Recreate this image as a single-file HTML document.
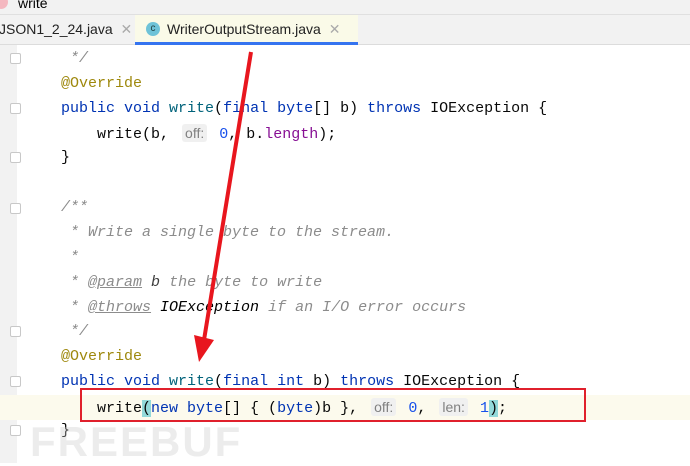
<!DOCTYPE html>
<html><head><style>
body{margin:0;width:690px;height:463px;overflow:hidden;background:#fff;position:relative;font-family:"Liberation Mono",monospace;}
.t{position:absolute;left:0;top:0;width:690px;height:14px;background:#f2f2f2;border-bottom:1px solid #e0e0e0}
.tabs{position:absolute;left:0;top:15px;width:690px;height:29px;background:#f2f2f2;border-bottom:1px solid #dcdcdc;font-family:"Liberation Sans",sans-serif;font-size:14px;color:#222}
.gut{position:absolute;left:0;top:45px;width:17px;height:418px;background:#f2f2f2}
.l{position:absolute;font-size:15px;line-height:18px;white-space:pre;color:#080808}
.k{color:#0033b3}.a{color:#9e880d}.c{color:#8c8c8c;font-style:italic}.f{color:#00627a}.p{color:#871094}.n{color:#1750eb}
.h{font-family:"Liberation Sans",sans-serif;font-size:14px;color:#808080;background:#f0f0f0;border-radius:3px;padding:1px 3px;margin:0 3px 0 4px;font-style:normal}
.fold{position:absolute;left:10px;width:9px;height:9px;border:1px solid #c8c8c8;background:#fff;border-radius:2px}
</style></head><body>
<div class="t"><span style="position:absolute;left:-6px;top:-5px;width:14px;height:14px;border-radius:50%;background:#f4b8c0"></span><span style="position:absolute;left:18px;top:-5px;font-family:'Liberation Sans';font-size:14px">write</span></div>
<div class="tabs">
<span style="position:absolute;left:-1px;top:6px">JSON1_2_24.java <span style="color:#aaa;margin-left:4px">✕</span></span>
<div style="position:absolute;left:135px;top:0;width:223px;height:27px;background:#fafae8;border-bottom:3px solid #3574f0"></div>
<span style="position:absolute;left:146px;top:7px;width:14px;height:14px;border-radius:50%;background:#6fc3d8;font-size:10px;text-align:center;line-height:14px;color:#244">c</span>
<span style="position:absolute;left:167px;top:6px">WriterOutputStream.java <span style="color:#aaa;margin-left:4px">✕</span></span>
</div>
<div class="gut"></div>
<div style="position:absolute;left:0;top:395px;width:690px;height:25px;background:#fcfaed"></div>
<div class="fold" style="top:53px"></div><div class="fold" style="top:103px"></div><div class="fold" style="top:152px"></div><div class="fold" style="top:203px"></div><div class="fold" style="top:326px"></div><div class="fold" style="top:376px"></div><div class="fold" style="top:425px"></div>
<div class="l c" style="left:61px;top:50px"> */</div>
<div class="l a" style="left:61px;top:75px">@Override</div>
<div class="l" style="left:61px;top:100px"><span class="k">public void </span><span class="f">write</span>(<span class="k">final byte</span>[] b) <span class="k">throws</span> IOException {</div>
<div class="l" style="left:61px;top:124px">    write(b, <span class="h">off:</span> <span class="n">0</span>, b.<span class="p">length</span>);</div>
<div class="l" style="left:61px;top:149px">}</div>
<div class="l c" style="left:61px;top:199px">/**</div>
<div class="l c" style="left:61px;top:224px"> * Write a single byte to the stream.</div>
<div class="l c" style="left:61px;top:249px"> *</div>
<div class="l c" style="left:61px;top:274px"> * <u>@param</u> <span style="color:#3d3d3d">b</span> the byte to write</div>
<div class="l c" style="left:61px;top:299px"> * <u>@throws</u> <span style="color:#000">IOException</span> if an I/O error occurs</div>
<div class="l c" style="left:61px;top:323px"> */</div>
<div class="l a" style="left:61px;top:348px">@Override</div>
<div class="l" style="left:61px;top:373px"><span class="k">public void </span><span class="f">write</span>(<span class="k">final int</span> b) <span class="k">throws</span> IOException {</div>
<div class="l" style="left:61px;top:398px">    write<span style="background:#93d9d9">(</span><span class="k">new byte</span>[] { (<span class="k">byte</span>)b }, <span class="h">off:</span> <span class="n">0</span>, <span class="h">len:</span> <span class="n">1</span><span style="background:#93d9d9">)</span>;</div>
<div class="l" style="left:61px;top:422px">}</div>
<div style="position:absolute;left:80px;top:388px;width:506px;height:34px;border:2px solid #e0202c;box-sizing:border-box"></div>
<div style="position:absolute;left:30px;top:418px;font-family:'Liberation Sans';font-weight:bold;font-size:42px;color:rgba(200,200,200,0.35);letter-spacing:2px">FREEBUF</div>
<svg style="position:absolute;left:0;top:0" width="690" height="463"><line x1="251" y1="52" x2="204" y2="340" stroke="#e8161e" stroke-width="4"/><polygon points="194,335 214,340 199,362" fill="#e8161e"/></svg>
</body></html>
